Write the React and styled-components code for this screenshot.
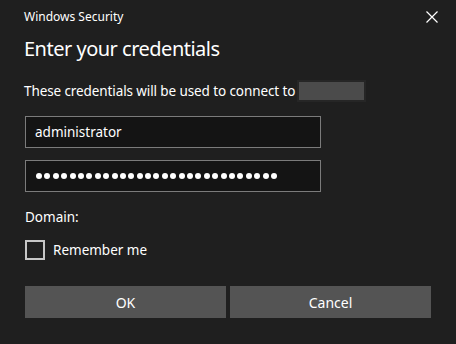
import React from "react";
import styled, { createGlobalStyle } from "styled-components";

const GlobalStyle = createGlobalStyle`
  html, body {
    margin: 0;
    padding: 0;
    background: #1f1f1f;
  }
`;

const Dialog = styled.div`
  width: 456px;
  height: 344px;
  box-sizing: border-box;
  background: #1f1f1f;
  color: #ffffff;
  font-family: "Noto Sans", "Open Sans", sans-serif;
  display: flex;
  flex-direction: column;
  padding: 0 25px 0 24px;
`;

const TitleBar = styled.div`
  height: 32px;
  display: flex;
  align-items: center;
  justify-content: space-between;
`;

const Caption = styled.span`
  font-size: 12px;
  color: #ffffff;
  margin-top: 1px;
`;

const CloseButton = styled.button`
  width: 24px;
  height: 24px;
  margin-right: -13px;
  margin-top: 1px;
  background: none;
  border: none;
  padding: 0;
  display: flex;
  align-items: center;
  justify-content: center;
  color: #ffffff;
`;

const Heading = styled.h1`
  margin: 3px 0 0;
  font-size: 20px;
  font-weight: 400;
  line-height: 28px;
  letter-spacing: -0.5px;
`;

const Description = styled.p`
  margin: 18px 0 0;
  font-size: 13.5px;
  line-height: 20px;
  display: flex;
  align-items: center;
  white-space: nowrap;
  letter-spacing: -0.1px;
`;

const Redacted = styled.span`
  display: inline-block;
  width: 65px;
  height: 18px;
  background: #4b4b4b;
  box-shadow: 0 0 0 2px #262626;
  margin-left: 4px;
`;

const Field = styled.div`
  width: 296px;
  height: 32px;
  box-sizing: border-box;
  margin-top: ${(p) => p.gap}px;
  margin-left: 1px;
  background: #141414;
  border: 1px solid #7b7b7b;
  display: flex;
  align-items: center;
  padding: 0 9px;
  font-size: 13.5px;
`;

const Dots = styled.div`
  display: flex;
  gap: 2.4px;
  padding-left: 1px;
`;

const Dot = styled.span`
  width: 6px;
  height: 6px;
  border-radius: 50%;
  background: #ffffff;
`;

const Label = styled.div`
  margin-top: 15px;
  margin-left: 1px;
  font-size: 13.5px;
  line-height: 20px;
`;

const CheckRow = styled.label`
  margin-top: 13px;
  margin-left: 1px;
  display: flex;
  align-items: center;
  gap: 8px;
  font-size: 13.5px;
`;

const Box = styled.span`
  width: 20px;
  height: 20px;
  box-sizing: border-box;
  border: 2px solid #c6c6c6;
`;

const Buttons = styled.div`
  margin-top: 26px;
  margin-left: 1px;
  display: grid;
  grid-template-columns: 201px 201px;
  gap: 4px;
`;

const Button = styled.button`
  height: 32px;
  background: #545454;
  color: #ffffff;
  border: none;
  font-family: inherit;
  font-size: 14px;
`;

export default function App() {
  return (
    <>
      <GlobalStyle />
      <Dialog>
        <TitleBar>
          <Caption>Windows Security</Caption>
          <CloseButton aria-label="Close">
            <svg width="12" height="12" viewBox="0 0 12 12">
              <path d="M0.5 0.5 L11.5 11.5 M11.5 0.5 L0.5 11.5" stroke="#ffffff" strokeWidth="1.2" />
            </svg>
          </CloseButton>
        </TitleBar>
        <Heading>Enter your credentials</Heading>
        <Description>
          These credentials will be used to connect to
          <Redacted />
        </Description>
        <Field gap={15}>administrator</Field>
        <Field gap={12}>
          <Dots>
            {Array.from({ length: 29 }).map((_, i) => (
              <Dot key={i} />
            ))}
          </Dots>
        </Field>
        <Label>Domain:</Label>
        <CheckRow>
          <Box />
          Remember me
        </CheckRow>
        <Buttons>
          <Button>OK</Button>
          <Button>Cancel</Button>
        </Buttons>
      </Dialog>
    </>
  );
}
